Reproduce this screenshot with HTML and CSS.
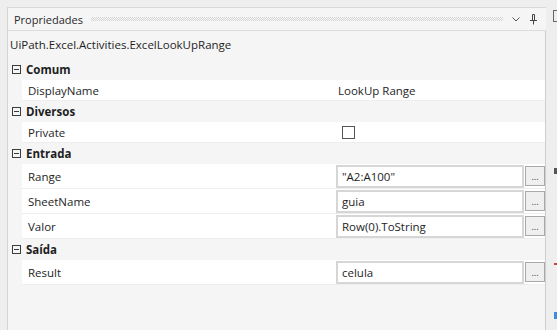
FILE: index.html
```html
<!DOCTYPE html>
<html lang="pt">
  <head>
    <meta charset="UTF-8" />
    <title>Propriedades</title>
    <link rel="stylesheet" href="styles.css">
  </head>
  <body>
    <div class="window">
      <div class="panel">
        <div class="titlebar">
          <span class="title">Propriedades</span>
          <span class="grip"></span>
          <svg class="chevron" width="8" height="5" viewBox="0 0 8 5"><polyline points="0.5,0.5 4,4 7.5,0.5" fill="none" stroke="#555" stroke-width="1"/></svg>
          <svg class="pin" width="7" height="11" viewBox="0 0 7 11"><path d="M2.5 0.5h2v6h-2z M0 6.5h7 M3.5 6.5v4" fill="none" stroke="#444" stroke-width="1"/></svg>
        </div>
        <div class="content">
          <div class="typename">UiPath.Excel.Activities.ExcelLookUpRange</div>

          <div class="cat"><span class="toggle"></span>Comum</div>
          <div class="prop">
            <span class="name">DisplayName</span>
            <span class="value">LookUp Range</span>
          </div>

          <div class="cat"><span class="toggle"></span>Diversos</div>
          <div class="prop">
            <span class="name">Private</span>
            <span class="value"><span class="check"></span></span>
          </div>

          <div class="cat"><span class="toggle"></span>Entrada</div>
          <div class="prop tall">
            <span class="name">Range</span>
            <span class="value"><span class="field">"A2:A100"</span><span class="more">...</span></span>
          </div>
          <div class="prop tall">
            <span class="name">SheetName</span>
            <span class="value"><span class="field">guia</span><span class="more">...</span></span>
          </div>
          <div class="prop tall">
            <span class="name">Valor</span>
            <span class="value"><span class="field">Row(0).ToString</span><span class="more">...</span></span>
          </div>

          <div class="cat"><span class="toggle"></span>Saída</div>
          <div class="prop tall">
            <span class="name">Result</span>
            <span class="value"><span class="field">celula</span><span class="more">...</span></span>
          </div>
        </div>
      </div>
      <div class="side">
        <span class="mark bracket"></span>
        <span class="mark dark"></span>
        <span class="mark red"></span>
        <span class="mark blue"></span>
      </div>
    </div>
  </body>
</html>
```

FILE: styles.css
```css
body {
  margin: 0;
  background: #eeeeee;
  font-family: "Open Sans", "Noto Sans", sans-serif;
  font-size: 11.5px;
  color: #1e1e1e;
}

.window {
  display: flex;
  height: 330px;
  padding-top: 7px;
  box-sizing: border-box;
  overflow: hidden;
}

.panel {
  margin-left: 7px;
  width: 538px;
  border-left: 1px solid #d4d4d4;
  border-top: 1px solid #d8d8d8;
  background: #f5f5f5;
  display: flex;
  flex-direction: column;
}

.titlebar {
  height: 22px;
  display: flex;
  align-items: center;
  padding-left: 6px;
  border-bottom: 1px solid #dcdcdc;
}
.title {
  font-size: 11px;
  color: #2a2a2a;
}
.grip {
  flex: 1;
  height: 4px;
  margin: 0 9px 0 8px;
  background: repeating-conic-gradient(#d6d6d6 0 25%, transparent 0 50%) 0 0 / 2px 2px;
}
.chevron {
  margin-right: 10px;
}
.pin {
  margin-right: 9px;
}

.content {
  flex: 1;
  border-right: 1px solid #cdcdcd;
}
.typename {
  height: 28px;
  line-height: 28px;
  padding-left: 2px;
}

.cat {
  display: flex;
  align-items: center;
  height: 21px;
  font-weight: bold;
}
.toggle {
  position: relative;
  width: 7px;
  height: 7px;
  margin: 0 5px 0 4px;
  border: 1px solid #3c3c3c;
}
.toggle::after {
  content: "";
  position: absolute;
  left: 1px;
  top: 3px;
  width: 5px;
  height: 1px;
  background: #3c3c3c;
}

.prop {
  display: flex;
  align-items: center;
  height: 20px;
  margin-left: 14px;
  background: #ffffff;
  border-bottom: 1px solid #eeeeee;
}
.prop.tall {
  height: 24px;
}
.name {
  width: 307px;
  padding-left: 6px;
}
.value {
  flex: 1;
  display: flex;
  align-items: center;
  padding-left: 3px;
}
.tall .value {
  padding-left: 1px;
}

.check {
  width: 11px;
  height: 11px;
  margin-left: 4px;
  border: 1px solid #555555;
  background: #ffffff;
}

.field {
  width: 180px;
  height: 19px;
  line-height: 19px;
  padding-left: 4px;
  border: 2px solid #d6d6d6;
  background: #ffffff;
}
.more {
  width: 18px;
  height: 18px;
  margin-left: 1px;
  border: 1px solid #a9a9a9;
  background: #efefef;
  font-size: 9px;
  line-height: 20px;
  text-align: center;
  color: #333333;
}

.side {
  flex: 1;
  display: flex;
  flex-direction: column;
  align-items: flex-end;
}
.mark {
  width: 3px;
}
.bracket {
  height: 10px;
  margin-top: 3px;
  border: 1px solid #666666;
  border-right: none;
}
.dark {
  height: 6px;
  margin-top: 146px;
  background: #555555;
}
.red {
  height: 2px;
  margin-top: 89px;
  background: #d04040;
}
.blue {
  height: 7px;
  margin-top: 47px;
  background: #3c8ce0;
}
```
